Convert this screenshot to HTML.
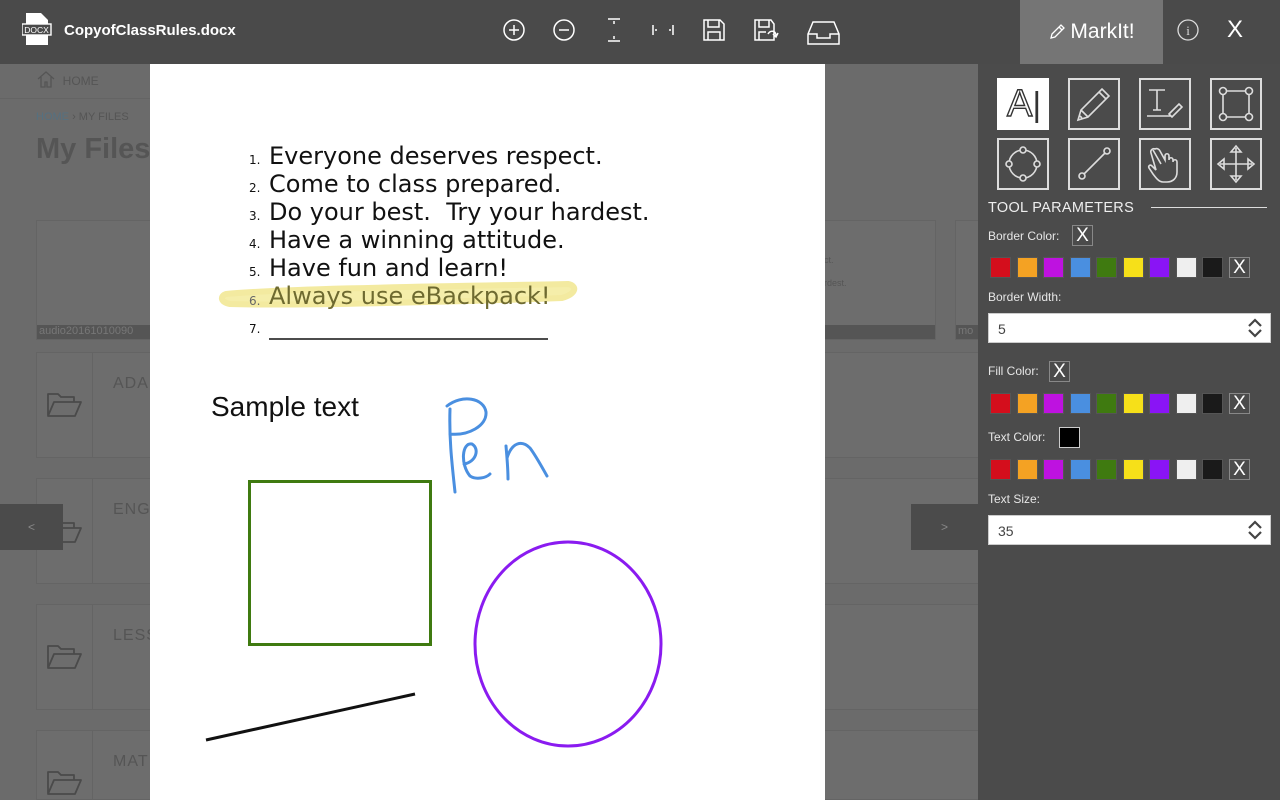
<!DOCTYPE html>
<html style="overflow:hidden;height:800px"><head><meta charset="utf-8"><style>
*{margin:0;padding:0;box-sizing:border-box}
body{width:1280px;height:800px;overflow:hidden;background:#6b6b6b;font-family:"Liberation Sans",sans-serif;position:relative}
.a{position:absolute}
.top{left:0;top:0;width:1280px;height:64px;background:#4a4a4a}
.card{position:absolute;background:#6d6d6d;border:1px solid #646464;overflow:hidden}
.fold{position:absolute;left:0;top:0;width:56px;height:100%;border-right:1px solid #646464}
.ct{position:absolute;left:76px;top:22px;color:#555;font-size:16px;letter-spacing:1px}
.panel{left:978px;top:64px;width:302px;height:736px;background:#4b4b4b}
.tool{position:absolute;width:52px;height:52px;border:2px solid #ddd}
.lbl{position:absolute;color:#e6e6e6;font-size:12px;left:988px}
.sw{position:absolute;width:21px;height:21px;border:1px solid #555}
.xb{position:absolute;width:21px;height:21px;border:1px solid #888;color:#fff;font-size:19px;line-height:19px;text-align:center}
.inp{position:absolute;left:988px;width:283px;height:30px;background:#fff;border:1px solid #ccc;font-size:14px;color:#444;padding:7px 9px}
.doc{font-family:"DejaVu Sans",sans-serif;font-size:24px;color:#111;position:absolute;left:269px;white-space:nowrap}
.num{font-family:"DejaVu Sans",sans-serif;font-size:12px;color:#111;position:absolute;left:249px}
</style></head><body>
<div class="a" style="left:36px;top:70px;color:#555;font-size:12px">
<svg width="20" height="18" viewBox="0 0 20 18" style="vertical-align:-3px"><path d="M2 9L10 2L18 9M5 7V17H9V12H11V17H15V7" fill="none" stroke="#555" stroke-width="1.3"/></svg>&nbsp; HOME</div>
<div class="a" style="left:0;top:98px;width:150px;height:1px;background:#646464"></div>
<div class="a" style="left:36px;top:111px;font-size:11px;color:#557080">HOME <span style="color:#555">› MY FILES</span></div>
<div class="a" style="left:36px;top:133px;font-size:29px;font-weight:bold;color:#555">My Files</div>
<div class="card" style="left:36px;top:220px;width:130px;height:120px"><div class="a" style="left:0;bottom:0;width:100%;height:14px;background:#555;color:#777;font-size:11px;padding-left:2px">audio20161010090</div></div>
<div class="card" style="left:800px;top:220px;width:136px;height:120px;font-size:9px;color:#555"><div class="a" style="left:18px;top:34px">ect.</div><div class="a" style="left:18px;top:57px">ardest.</div><div class="a" style="left:0;bottom:0;width:100%;height:14px;background:#555"></div></div>
<div class="card" style="left:955px;top:220px;width:40px;height:120px"><div class="a" style="left:0;bottom:0;width:100%;height:14px;background:#555;color:#777;font-size:11px;padding-left:2px">mo</div></div>
<div class="card" style="left:36px;top:352px;width:960px;height:106px"><div class="fold"></div><div class="ct">ADA</div></div>
<div class="card" style="left:36px;top:478px;width:960px;height:106px"><div class="fold"></div><div class="ct">ENG</div></div>
<div class="card" style="left:36px;top:604px;width:960px;height:106px"><div class="fold"></div><div class="ct">LESS</div></div>
<div class="card" style="left:36px;top:730px;width:960px;height:70px"><div class="fold"></div><div class="ct">MAT</div></div>
<svg class="a" style="left:46px;top:388px" width="36" height="32" viewBox="0 0 36 32"><path d="M2 28V6H12L15 9H28V14M2 28L8 14H35L29 28Z" fill="none" stroke="#4a4a4a" stroke-width="1.8" stroke-linejoin="round"/></svg>
<svg class="a" style="left:46px;top:514px" width="36" height="32" viewBox="0 0 36 32"><path d="M2 28V6H12L15 9H28V14M2 28L8 14H35L29 28Z" fill="none" stroke="#4a4a4a" stroke-width="1.8" stroke-linejoin="round"/></svg>
<svg class="a" style="left:46px;top:640px" width="36" height="32" viewBox="0 0 36 32"><path d="M2 28V6H12L15 9H28V14M2 28L8 14H35L29 28Z" fill="none" stroke="#4a4a4a" stroke-width="1.8" stroke-linejoin="round"/></svg>
<svg class="a" style="left:46px;top:766px" width="36" height="32" viewBox="0 0 36 32"><path d="M2 28V6H12L15 9H28V14M2 28L8 14H35L29 28Z" fill="none" stroke="#4a4a4a" stroke-width="1.8" stroke-linejoin="round"/></svg>
<div class="a" style="left:0;top:504px;width:63px;height:46px;background:#4b4b4b;color:#888;font-size:12px;text-align:center;line-height:46px">&lt;</div>
<div class="a" style="left:911px;top:504px;width:67px;height:46px;background:#4b4b4b;color:#888;font-size:12px;text-align:center;line-height:46px">&gt;</div>

<div class="a" style="left:150px;top:64px;width:675px;height:736px;background:#fff"></div>
<svg class="a" style="left:150px;top:64px" width="675" height="736">
<path d="M76 230 C140 224 320 222 418 220 C428 222 426 230 412 234 C300 238 140 242 80 240 C70 238 70 232 76 230Z" fill="#f5eeaa" stroke="#f3eaa0" stroke-width="6" stroke-linejoin="round"/>
<line x1="119" y1="275" x2="398" y2="275" stroke="#111" stroke-width="1.5"/>
<path d="M300 345C299 375 302 400 305 428M297 342C312 330 334 334 336 348C337 362 318 372 300 370M314 400C326 398 330 385 322 380C312 378 310 400 320 412C326 416 336 414 340 410M356 382C357 394 358 404 358 415M357 394C362 378 372 376 380 384C386 392 393 405 397 412" fill="none" stroke="#4a8fe0" stroke-width="3" stroke-linecap="round" stroke-linejoin="round"/>
<rect x="99.5" y="417.5" width="181" height="163" fill="none" stroke="#3f7a10" stroke-width="3"/>
<ellipse cx="418" cy="580" rx="93" ry="102" fill="none" stroke="#8a1bf0" stroke-width="3"/>
<line x1="56" y1="676" x2="265" y2="630" stroke="#111" stroke-width="3"/>
</svg>
<div class="num" style="top:153px">1.</div><div class="doc" style="top:142px">Everyone deserves respect.</div>
<div class="num" style="top:181px">2.</div><div class="doc" style="top:170px">Come to class prepared.</div>
<div class="num" style="top:209px">3.</div><div class="doc" style="top:198px">Do your best.&nbsp; Try your hardest.</div>
<div class="num" style="top:237px">4.</div><div class="doc" style="top:226px">Have a winning attitude.</div>
<div class="num" style="top:265px">5.</div><div class="doc" style="top:254px">Have fun and learn!</div>
<div class="num" style="top:294px;color:#666">6.</div><div class="doc" style="top:282px;color:#6e6a30">Always use eBackpack!</div>
<div class="num" style="top:322px">7.</div>
<div class="doc" style="left:211px;top:391px;font-size:28px;font-family:'Liberation Sans',sans-serif">Sample text</div>

<div class="a top"></div>
<svg class="a" style="left:22px;top:12px" width="30" height="34" viewBox="0 0 30 34"><path d="M4 1H19L26 8V33H4Z" fill="#fff"/><rect x="0" y="12" width="29" height="11" fill="#4a4a4a" stroke="#fff" stroke-width="1.4"/><text x="14.5" y="21" font-size="8.5" fill="#fff" text-anchor="middle" font-family="Liberation Sans">DOCX</text></svg>
<div class="a" style="left:64px;top:22px;color:#fff;font-size:15px;font-weight:bold">CopyofClassRules.docx</div>
<svg class="a" style="left:500px;top:16px" width="350" height="30" viewBox="0 0 350 30" fill="none" stroke="#fff" stroke-width="1.5">
<circle cx="14" cy="14" r="10"/><path d="M14 9V19M9 14H19"/>
<circle cx="64" cy="14" r="10"/><path d="M59 14H69"/>
<path d="M108 3H120M108 25H120M114 5V8M114 20V23" />
<path d="M153 9V19M155 14H157M173 9V19M171 14H169"/>
<path d="M204 4H220L224 8V24H204Z M208 4V11H219V4M208 24V16H220V24"/>
<path d="M255 4H271L274 8V24H255Z M259 4V11H269V4M259 24V16H266M268 18C270 14 276 14 276 20M273 18L276 21L278 17"/>
<path d="M308 18V28H339V18L334 6H313Z M308 18H317V22H330V18H339"/>
</svg>
<div class="a" style="left:1020px;top:0;width:143px;height:64px;background:#757575;color:#fff;font-size:21px;display:flex;align-items:center;justify-content:center;gap:4px"><svg width="18" height="18" viewBox="0 0 18 18"><path d="M3 15L4 11L13 2L16 5L7 14Z M11 4L14 7" fill="none" stroke="#fff" stroke-width="1.3"/></svg>MarkIt!</div>
<svg class="a" style="left:1176px;top:18px" width="24" height="24" viewBox="0 0 24 24"><circle cx="12" cy="12" r="10" fill="none" stroke="#ddd" stroke-width="1.3"/><text x="12" y="17" font-size="13" fill="#ddd" text-anchor="middle" font-family="Liberation Serif">i</text></svg>
<div class="a" style="left:1227px;top:16px;color:#fff;font-size:24px">X</div>

<div class="a panel"></div>
<div class="tool" style="left:997px;top:78px;background:#fff;border-color:#fff"><div style="font-size:38px;color:#fff;-webkit-text-stroke:1.4px #333;line-height:48px;padding-left:8px;font-family:'Liberation Sans'">A<span style="-webkit-text-stroke:0;color:#333;font-size:34px">|</span></div></div>
<div class="tool" style="left:1068px;top:78px"><svg width="48" height="48" viewBox="0 0 48 48" fill="none" stroke="#ddd" stroke-width="1.6"><path d="M8 40L11 30L32 9L39 16L18 37Z M29 12L36 19M11 30L18 37M10 36L12 38"/></svg></div>
<div class="tool" style="left:1139px;top:78px"><svg width="48" height="48" viewBox="0 0 48 48" fill="none" stroke="#ddd" stroke-width="1.6"><path d="M8 10H24M16 10V30M12 30H20M6 36H30M28 34L38 24L41 27L31 37Z"/></svg></div>
<div class="tool" style="left:1210px;top:78px"><svg width="48" height="48" viewBox="0 0 48 48" fill="none" stroke="#ddd" stroke-width="1.6"><path d="M11 11H37V37H11Z"/><circle cx="11" cy="11" r="3.5" fill="#4b4b4b"/><circle cx="37" cy="11" r="3.5" fill="#4b4b4b"/><circle cx="11" cy="37" r="3.5" fill="#4b4b4b"/><circle cx="37" cy="37" r="3.5" fill="#4b4b4b"/></svg></div>
<div class="tool" style="left:997px;top:138px"><svg width="48" height="48" viewBox="0 0 48 48" fill="none" stroke="#ddd" stroke-width="1.6"><circle cx="24" cy="24" r="14"/><circle cx="24" cy="10" r="3" fill="#4b4b4b"/><circle cx="24" cy="38" r="3" fill="#4b4b4b"/><circle cx="10" cy="24" r="3" fill="#4b4b4b"/><circle cx="38" cy="24" r="3" fill="#4b4b4b"/></svg></div>
<div class="tool" style="left:1068px;top:138px"><svg width="48" height="48" viewBox="0 0 48 48" fill="none" stroke="#ddd" stroke-width="1.6"><path d="M14 34L35 13"/><circle cx="12" cy="36" r="3"/><circle cx="37" cy="11" r="3"/></svg></div>
<div class="tool" style="left:1139px;top:138px"><svg width="48" height="48" viewBox="0 0 48 48" fill="none" stroke="#ddd" stroke-width="1.6"><path d="M12 10L20 24M14 9C16 8 18 9 19 11L24 20V16C24 13 28 13 28 16V20C28 17 32 17 32 20V22C32 19 36 19 36 22V32C36 38 32 42 26 42H22C18 42 15 38 12 34L8 28C7 26 9 24 11 26L15 30L10 13C9 10 12 8 14 9Z"/></svg></div>
<div class="tool" style="left:1210px;top:138px"><svg width="48" height="48" viewBox="0 0 48 48" fill="none" stroke="#ddd" stroke-width="1.6"><path d="M24 8V40M8 24H40M24 6L19 12H29Z M24 42L19 36H29Z M6 24L12 19V29Z M42 24L36 19V29Z"/></svg></div>
<div class="a" style="left:988px;top:200px;color:#eee;font-size:14.5px;letter-spacing:.3px">TOOL PARAMETERS</div>
<div class="a" style="left:1151px;top:207px;width:116px;height:1px;background:#ddd"></div>
<div class="lbl" style="top:229px">Border Color:</div><div class="xb" style="left:1072px;top:225px">X</div>
<div class="lbl" style="top:290px">Border Width:</div>
<div class="inp" style="top:313px">5</div>
<div class="lbl" style="top:364px">Fill Color:</div><div class="xb" style="left:1049px;top:361px">X</div>
<div class="lbl" style="top:430px">Text Color:</div><div class="a" style="left:1059px;top:427px;width:21px;height:21px;background:#000;border:1px solid #ccc"></div>
<div class="lbl" style="top:492px">Text Size:</div>
<div class="inp" style="top:515px">35</div>
<svg class="a" style="left:1246px;top:317px" width="18" height="22" viewBox="0 0 18 22" fill="none" stroke="#444" stroke-width="2.2"><path d="M3 9L9 3L15 9M3 13L9 19L15 13"/></svg>
<svg class="a" style="left:1246px;top:519px" width="18" height="22" viewBox="0 0 18 22" fill="none" stroke="#444" stroke-width="2.2"><path d="M3 9L9 3L15 9M3 13L9 19L15 13"/></svg>
<div id="sw"></div>
<script>
var c=['#d40e1c','#f4a223','#be12e0','#4a8fe0','#3f7a10','#f6e019','#8a14f5','#efefef','#1a1a1a'];
var h='';[257,393,459].forEach(function(y){c.forEach(function(col,i){h+='<div class="sw" style="left:'+(990+i*26.5)+'px;top:'+y+'px;background:'+col+'"></div>'});h+='<div class="xb" style="left:1229px;top:'+y+'px">X</div>'});
document.getElementById('sw').innerHTML=h;
</script>
</body></html>
